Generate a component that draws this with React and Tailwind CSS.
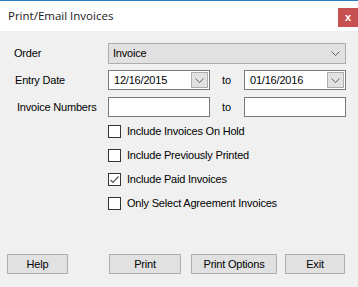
import React from 'react';

const Chevron = () => (
  <svg width="9" height="5" viewBox="0 0 9 5" fill="none">
    <path d="M0.5 0.5 L4.5 4.5 L8.5 0.5" stroke="#606060" strokeWidth="1" />
  </svg>
);

const DateBox = ({ value }) => (
  <div className="flex h-[20px] w-[102px] items-center justify-between border border-[#7a7a7a] bg-white pl-[5px] pr-[1px]">
    <span className="text-[11px] tracking-[-0.2px] text-black">{value}</span>
    <div className="flex h-[16px] w-[17px] items-center justify-center border border-[#adadad] bg-[#e1e1e1]">
      <Chevron />
    </div>
  </div>
);

const CheckRow = ({ label, checked }) => (
  <div className="flex h-[13px] items-center">
    <div className="flex h-[13px] w-[13px] items-center justify-center border border-[#333333] bg-white">
      {checked && (
        <svg width="9" height="8" viewBox="0 0 9 8" fill="none">
          <path d="M0.5 4 L3 6.5 L8.5 0.5" stroke="#555555" strokeWidth="1.2" />
        </svg>
      )}
    </div>
    <span className="ml-[6px] text-[11px] tracking-[-0.2px] text-black">{label}</span>
  </div>
);

const Btn = ({ children, className }) => (
  <button className={`flex h-[20px] items-center justify-center border border-[#adadad] bg-[#e1e1e1] text-[11px] tracking-[-0.2px] text-black ${className}`}>
    {children}
  </button>
);

export default function App() {
  return (
    <div className="flex h-[287px] w-[358px] flex-col bg-[#f0f0f0] font-['Liberation_Sans',Arial,sans-serif]">
      {/* title bar */}
      <div className="flex h-[31px] items-center justify-between border-t border-[#2a78c8] bg-white">
        <span className="pl-[8px] font-['Open_Sans',sans-serif] text-[11.5px] text-[#1a1a1a]">Print/Email Invoices</span>
        <div className="mt-[7px] flex h-[19px] w-[20px] items-center justify-center self-start bg-[#c75050]">
          <span className="text-[11px] font-bold leading-none text-white">x</span>
        </div>
      </div>

      <div className="flex flex-1 flex-col pt-[12px]">
        <div className="flex h-[21px] items-center">
          <span className="w-[108px] pl-[14px] text-[11px] tracking-[-0.2px] text-black">Order</span>
          <div className="flex h-[21px] w-[238px] items-center justify-between border border-[#adadad] bg-[#e1e1e1] pl-[4px] pr-[5px]">
            <span className="text-[11px] tracking-[-0.2px] text-black">Invoice</span>
            <Chevron />
          </div>
        </div>

        <div className="mt-[6px] flex h-[20px] items-center">
          <span className="w-[108px] pl-[15px] text-[11px] tracking-[-0.2px] text-black">Entry Date</span>
          <DateBox value="12/16/2015" />
          <span className="w-[34px] pl-[12px] text-[11px] text-black">to</span>
          <DateBox value="01/16/2016" />
        </div>

        <div className="mt-[7px] flex h-[20px] items-center">
          <span className="w-[108px] pl-[17px] text-[11px] tracking-[-0.2px] text-black">Invoice Numbers</span>
          <div className="h-[20px] w-[102px] border border-[#7a7a7a] bg-white" />
          <span className="w-[34px] pl-[12px] text-[11px] text-black">to</span>
          <div className="h-[20px] w-[102px] border border-[#7a7a7a] bg-white" />
        </div>

        <div className="mt-[8px] flex flex-col gap-[11px] pl-[108px]">
          <CheckRow label="Include Invoices On Hold" />
          <CheckRow label="Include Previously Printed" />
          <CheckRow label="Include Paid Invoices" checked />
          <CheckRow label="Only Select Agreement Invoices" />
        </div>

        <div className="mt-[44px] flex">
          <Btn className="ml-[7px] w-[61px]">Help</Btn>
          <Btn className="ml-[41px] w-[72px]">Print</Btn>
          <Btn className="ml-[10px] w-[86px]">Print Options</Btn>
          <Btn className="ml-[8px] w-[60px]">Exit</Btn>
        </div>
      </div>
    </div>
  );
}
